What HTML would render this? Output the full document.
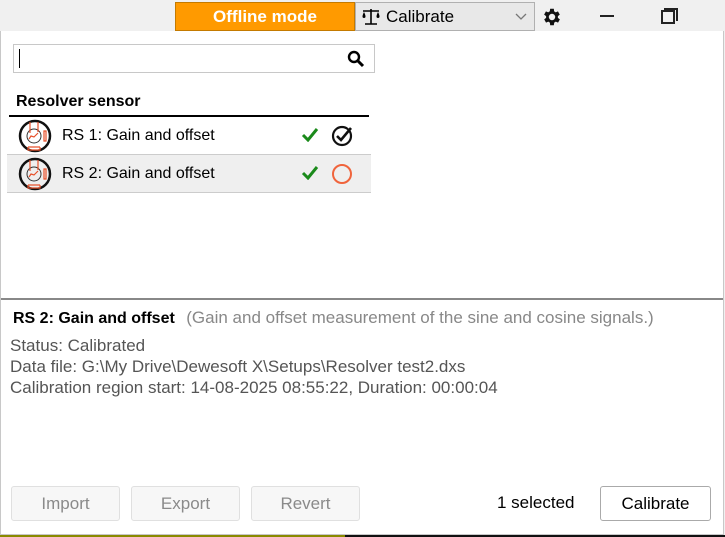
<!DOCTYPE html>
<html><head><meta charset="utf-8"><style>
*{box-sizing:border-box;margin:0;padding:0}
body{width:725px;height:537px;background:#f0f0f0;font-family:"Liberation Sans",sans-serif;position:relative;overflow:hidden;color:#000}
.abs{position:absolute}
.panel{left:0;top:31px;width:724px;height:504px;background:#fff;border:1px solid #c8c8c8;border-top:none}
.btn{position:absolute;top:486px;height:35px;border:1px solid #e0e0e0;border-radius:3px;background:#f7f7f7;color:#8a8a8a;font-size:17px;text-align:center;line-height:33px;width:109px}
.row{position:absolute;left:7px;width:364px;height:38px;font-size:15px;line-height:38px}
</style></head><body>
<div class="abs" style="left:175px;top:2px;width:180px;height:29px;background:#ff9a00;border:1px solid #c47a00;color:#fff;font-weight:bold;font-size:17px;text-align:center;line-height:27px">Offline mode</div>
<div class="abs" style="left:355px;top:2px;width:180px;height:29px;background:#e8e8e8;border:1px solid #b0b0b0;font-size:17px;line-height:27px;padding-left:30px">Calibrate
<svg class="abs" style="left:4px;top:5px" width="22" height="18" viewBox="0 0 22 18"><path d="M11 1V16M5 16H17M3 3H19" stroke="#000" stroke-width="1.6" fill="none"/><path d="M4 4C2 8 2 10 4 10C6 10 6 8 4 4ZM18 4C16 8 16 10 18 10C20 10 20 8 18 4Z" fill="#000"/></svg>
<svg class="abs" style="left:159px;top:10px" width="12" height="8"><path d="M1 1L6 6L11 1" stroke="#777" stroke-width="1.3" fill="none"/></svg></div>
<svg class="abs" style="left:541px;top:6px" width="22" height="22" viewBox="0 0 24 24"><path fill="#111" fill-rule="evenodd" d="M19.4 13a7.5 7.5 0 000-2l2.1-1.6-2-3.5-2.5 1a7.6 7.6 0 00-1.7-1L15 3h-4l-.4 2.9a7.6 7.6 0 00-1.7 1l-2.5-1-2 3.5L6.6 11a7.5 7.5 0 000 2l-2.1 1.6 2 3.5 2.5-1a7.6 7.6 0 001.7 1L11 21h4l.4-2.9a7.6 7.6 0 001.7-1l2.5 1 2-3.5zM13 15.5A3.5 3.5 0 1113 8.5a3.5 3.5 0 010 7z" transform="translate(-1 0)"/></svg>
<div class="abs" style="left:600px;top:15px;width:14px;height:2px;background:#222"></div>
<div class="abs" style="left:661px;top:10px;width:14px;height:14px;border:2px solid #222;border-top-width:2px"></div>
<div class="abs" style="left:664px;top:8px;width:14px;height:2px;background:#222"></div>
<div class="abs" style="left:676px;top:8px;width:2px;height:13px;background:#222"></div>
<div class="abs panel"></div>
<div class="abs" style="left:13px;top:44px;width:362px;height:29px;border:1px solid #c8c8c8;background:#fff"></div>
<div class="abs" style="left:19px;top:49px;width:1px;height:19px;background:#000"></div>
<svg class="abs" style="left:347px;top:50px" width="18" height="18" viewBox="0 0 18 18"><circle cx="7" cy="7" r="5" stroke="#000" stroke-width="2.4" fill="none"/><path d="M11 11L16 16" stroke="#000" stroke-width="3"/></svg>
<div class="abs" style="left:16px;top:93px;font-weight:bold;font-size:16px">Resolver sensor</div>
<div class="abs" style="left:9px;top:115px;width:360px;height:2px;background:#000"></div>
<div class="row" style="top:117px;border-bottom:1px solid #ccc"></div>
<div class="row" style="top:155px;background:#efefef;border-bottom:1px solid #ccc"></div>
<div class="abs" style="left:62px;top:127px;font-size:16px">RS 1: Gain and offset</div>
<div class="abs" style="left:62px;top:165px;font-size:16px">RS 2: Gain and offset</div>
<svg class="abs" style="left:17px;top:119px" width="36" height="34" viewBox="0 0 36 34"><circle cx="18" cy="17" r="15" stroke="#111" stroke-width="2.5" fill="none"/><circle cx="17" cy="17" r="7" stroke="#333" stroke-width="1" fill="none"/><path d="M13 3V14M21 3V13M12 20L14 17L17 18L21 14M11 28H23M11 28V31H23V28M27 12H29V22H27Z" stroke="#e8502a" stroke-width="1.2" fill="none"/></svg>
<svg class="abs" style="left:17px;top:157px" width="36" height="34" viewBox="0 0 36 34"><circle cx="18" cy="17" r="15" stroke="#111" stroke-width="2.5" fill="none"/><circle cx="17" cy="17" r="7" stroke="#333" stroke-width="1" fill="none"/><path d="M13 3V14M21 3V13M12 20L14 17L17 18L21 14M11 28H23M11 28V31H23V28M27 12H29V22H27Z" stroke="#e8502a" stroke-width="1.2" fill="none"/></svg>
<svg class="abs" style="left:301px;top:127px" width="18" height="15"><path d="M2 8L7 13L16 2" stroke="#1a8a1a" stroke-width="3" fill="none"/></svg>
<svg class="abs" style="left:301px;top:165px" width="18" height="15"><path d="M2 8L7 13L16 2" stroke="#1a8a1a" stroke-width="3" fill="none"/></svg>
<svg class="abs" style="left:331px;top:124px" width="24" height="24"><circle cx="11" cy="12" r="9" stroke="#111" stroke-width="2.2" fill="none"/><path d="M6 12L10 16L20 4" stroke="#111" stroke-width="2.6" fill="none"/></svg>
<svg class="abs" style="left:331px;top:162px" width="24" height="24"><circle cx="11" cy="12" r="9" stroke="#f0643c" stroke-width="2" fill="none"/></svg>
<div class="abs" style="left:1px;top:298px;width:722px;height:2px;background:#888"></div>
<div class="abs" style="left:13px;top:308px;font-size:16px;font-weight:bold">RS 2: Gain and offset <span style="font-weight:normal;color:#888;margin-left:7px;font-size:17px">(Gain and offset measurement of the sine and cosine signals.)</span></div>
<div class="abs" style="left:10px;top:335px;font-size:17px;color:#555;line-height:21px">Status: Calibrated<br>Data file: G:\My Drive\Dewesoft X\Setups\Resolver test2.dxs<br>Calibration region start: 14-08-2025 08:55:22, Duration: 00:00:04</div>
<div class="btn" style="left:11px">Import</div>
<div class="btn" style="left:131px">Export</div>
<div class="btn" style="left:251px">Revert</div>
<div class="abs" style="left:497px;top:493px;font-size:17px">1 selected</div>
<div class="btn" style="left:600px;width:111px;background:#fff;border-color:#aaa;color:#000">Calibrate</div>
<div class="abs" style="left:0;top:535px;width:345px;height:2px;background:#8a8a00"></div>
<div class="abs" style="left:345px;top:535px;width:380px;height:2px;background:#111"></div>
</body></html>
